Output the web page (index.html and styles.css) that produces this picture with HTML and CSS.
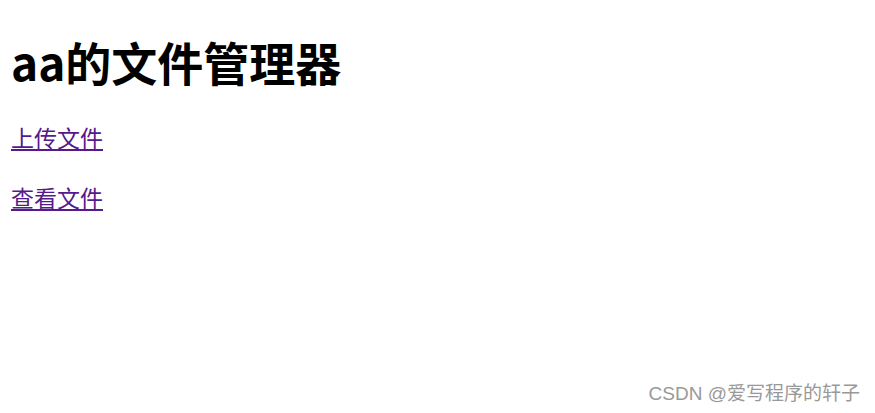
FILE: index.html
```html
<!DOCTYPE html>
<html lang="zh-CN">
<head>
<meta charset="utf-8">
<title>aa的文件管理器</title>
<link rel="stylesheet" href="styles.css">
</head>
<body>
<h1 class="title">aa的文件管理器</h1>
<p class="item"><a class="link" href="#upload">上传文件</a></p>
<p class="item"><a class="link" href="#view">查看文件</a></p>
<div class="watermark">CSDN @爱写程序的轩子</div>
</body>
</html>
```

FILE: styles.css
```css
html, body {
  height: 100%;
}
body {
  margin: 0;
  padding: 11px;
  box-sizing: border-box;
  background: #fff;
  color: #000;
  font-family: "Noto Sans CJK SC", "Noto Sans", sans-serif;
  font-size: 23px;
  position: relative;
}
.title {
  font-size: 46px;
  font-weight: 700;
  line-height: 58px;
  margin: 21px 0 29px;
}
.item {
  margin: 0 0 23px;
  line-height: 37px;
}
.link {
  color: #551a8b;
  text-decoration: underline;
}
.watermark {
  position: absolute;
  right: 15px;
  bottom: 8px;
  font-family: "Liberation Sans", "Noto Sans CJK SC", sans-serif;
  font-size: 19px;
  color: #999;
}
```
